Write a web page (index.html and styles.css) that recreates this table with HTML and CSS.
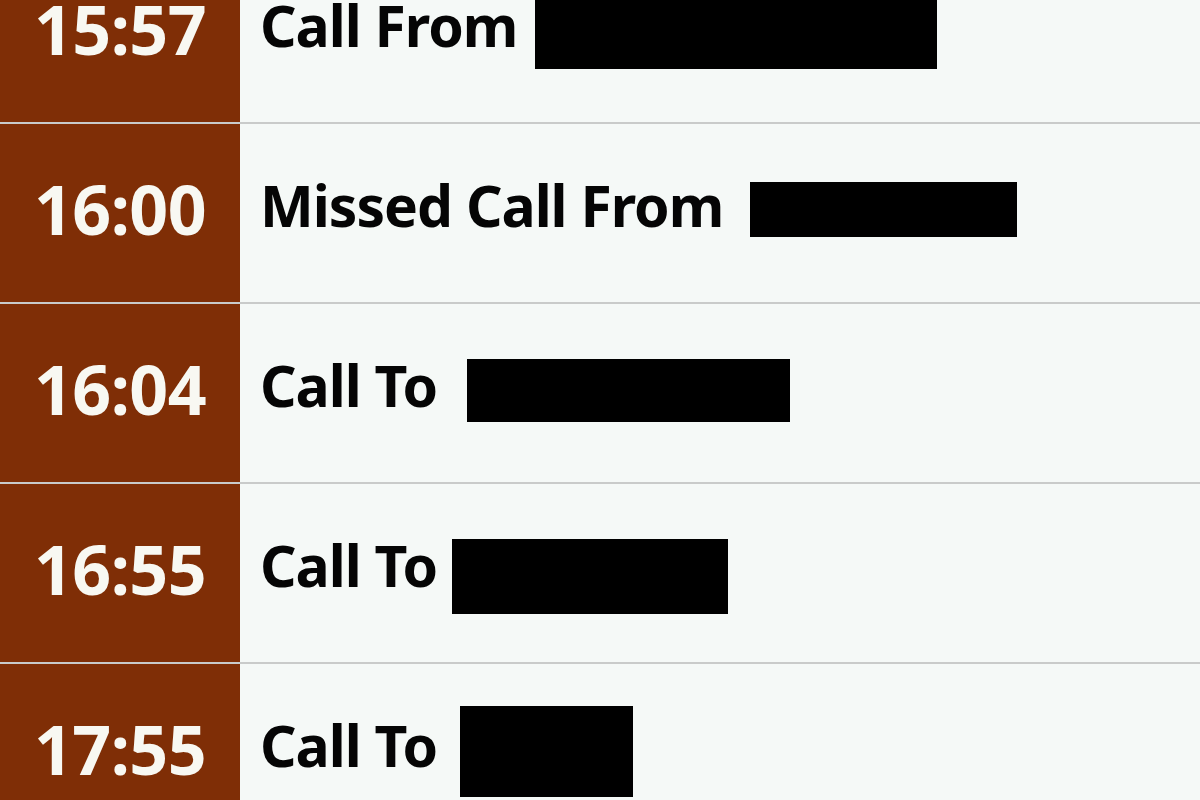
FILE: index.html
```html
<!DOCTYPE html>
<html>
<head>
<meta charset="utf-8">
<link rel="stylesheet" href="styles.css">
</head>
<body>
<div class="log">
  <div class="row">
    <div class="time">15:57</div>
    <div class="desc"><span class="label">Call From</span><span class="redact r1"></span></div>
  </div>
  <div class="row">
    <div class="time">16:00</div>
    <div class="desc"><span class="label">Missed Call From</span><span class="redact r2"></span></div>
  </div>
  <div class="row">
    <div class="time">16:04</div>
    <div class="desc"><span class="label">Call To</span><span class="redact r3"></span></div>
  </div>
  <div class="row">
    <div class="time">16:55</div>
    <div class="desc"><span class="label">Call To</span><span class="redact r4"></span></div>
  </div>
  <div class="row">
    <div class="time">17:55</div>
    <div class="desc"><span class="label">Call To</span><span class="redact r5"></span></div>
  </div>
</div>
</body>
</html>
```
FILE: styles.css
```css
html, body {
  margin: 0;
  padding: 0;
  height: 100%;
  overflow: hidden;
  background: #f5f9f7;
}
.log {
  margin-top: -56px;
  display: flex;
  flex-direction: column;
  font-family: "Noto Sans", "Open Sans", sans-serif;
  font-weight: 700;
}
.row {
  display: flex;
  height: 180px;
  box-sizing: border-box;
  border-bottom: 2px solid #c9cbca;
}
.time {
  width: 240px;
  flex: none;
  background: #7f2e06;
  color: #f8f8f2;
  font-size: 68px;
  letter-spacing: -0.5px;
  display: flex;
  align-items: center;
  justify-content: center;
  padding-bottom: 8px;
  box-sizing: border-box;
  line-height: 1;
}
.desc {
  flex: 1;
  display: flex;
  align-items: center;
  padding-left: 20px;
  padding-bottom: 16px;
  box-sizing: border-box;
  color: #050505;
  font-size: 57px;
  letter-spacing: -1px;
  line-height: 1;
  white-space: pre;
}
.redact {
  display: block;
  background: #000;
  align-self: flex-start;
  flex: none;
}
.r1 { width: 402px; height: 120px; margin-top: 5px; margin-left: 18px; }
.r2 { width: 267px; height: 55px; margin-top: 58px; margin-left: 27px; }
.r3 { width: 323px; height: 63px; margin-top: 55px; margin-left: 30px; }
.r4 { width: 276px; height: 75px; margin-top: 55px; margin-left: 15px; }
.r5 { width: 173px; height: 91px; margin-top: 42px; margin-left: 23px; }
```
